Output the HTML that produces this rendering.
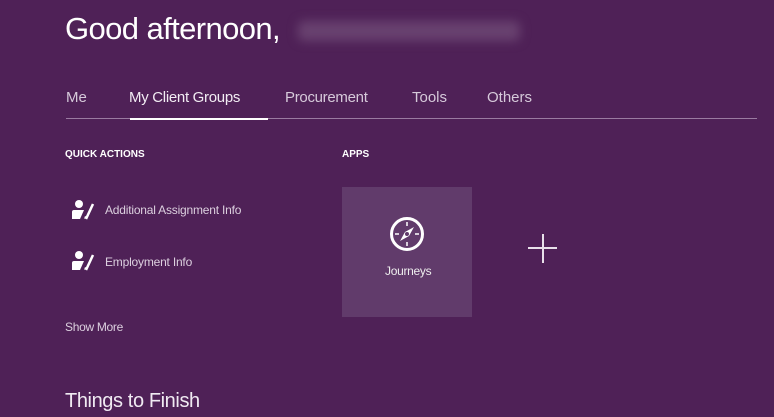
<!DOCTYPE html>
<html><head><meta charset="utf-8"><style>
body{margin:0;width:774px;height:417px;background:#4f2157;overflow:hidden;font-family:"Liberation Sans",sans-serif;color:#fff;position:relative}
.a{position:absolute;white-space:nowrap}
</style></head><body>
<div class="a" style="left:65px;top:11px;font-size:31px;color:#fff;letter-spacing:-0.6px">Good afternoon,</div>
<div class="a" style="left:298px;top:21px;width:222px;height:20px;background:#68416f;filter:blur(5px);border-radius:6px"></div>
<div class="a" style="left:66px;top:89px;font-size:15px;color:#d6c9da">Me</div>
<div class="a" style="left:129px;top:89px;font-size:15px;color:#f2ecf3;letter-spacing:-0.3px">My Client Groups</div>
<div class="a" style="left:285px;top:89px;font-size:15px;color:#d6c9da;letter-spacing:-0.3px">Procurement</div>
<div class="a" style="left:412px;top:89px;font-size:15px;color:#d6c9da">Tools</div>
<div class="a" style="left:487px;top:89px;font-size:15px;color:#d6c9da">Others</div>
<div class="a" style="left:66px;top:118px;width:691px;height:1px;background:#9a7ba1"></div>
<div class="a" style="left:130px;top:118px;width:138px;height:2px;background:#fff"></div>
<div class="a" style="left:65px;top:149px;font-size:10px;font-weight:bold">QUICK ACTIONS</div>
<div class="a" style="left:342px;top:149px;font-size:10px;font-weight:bold">APPS</div>
<svg class="a" style="left:72px;top:200px" width="24" height="20" viewBox="0 0 24 20"><circle cx="7" cy="4" r="4" fill="#fff"/><path d="M0 19V12Q0 10 2 10H12L8 19Z" fill="#fff"/><path d="M14 19L21 4" stroke="#fff" stroke-width="2.5"/><path d="M12 19l1-3 2 1z" fill="#fff"/></svg>
<svg class="a" style="left:72px;top:251px" width="24" height="20" viewBox="0 0 24 20"><circle cx="7" cy="4" r="4" fill="#fff"/><path d="M0 19V12Q0 10 2 10H12L8 19Z" fill="#fff"/><path d="M14 19L21 4" stroke="#fff" stroke-width="2.5"/><path d="M12 19l1-3 2 1z" fill="#fff"/></svg>
<div class="a" style="left:105px;top:203px;font-size:12px;color:#dcd0df;letter-spacing:-0.2px">Additional Assignment Info</div>
<div class="a" style="left:105px;top:255px;font-size:12px;color:#dcd0df;letter-spacing:-0.2px">Employment Info</div>
<div class="a" style="left:65px;top:320px;font-size:12px;color:#dcd0df;letter-spacing:-0.3px">Show More</div>
<div class="a" style="left:342px;top:187px;width:130px;height:130px;background:#613b6b"></div>
<svg class="a" style="left:389px;top:216px" width="36" height="36" viewBox="0 0 36 36"><circle cx="18" cy="18" r="15.5" fill="none" stroke="#fff" stroke-width="3"/><path d="M18 6v4M18 26v4M6 18h4M26 18h4" stroke="#fff" stroke-width="1.5"/><path d="M25 11L20 20L11 25L16 16Z" fill="#fff"/><circle cx="18" cy="18" r="2" fill="#613b6b"/></svg>
<div class="a" style="left:385px;top:264px;font-size:12px;color:#eee;letter-spacing:-0.3px">Journeys</div>
<div class="a" style="left:528px;top:247px;width:29px;height:1.5px;background:#e8e0ea"></div>
<div class="a" style="left:542px;top:234px;width:1.5px;height:29px;background:#e8e0ea"></div>
<div class="a" style="left:65px;top:390px;font-size:20px;color:#f0eaf2;letter-spacing:-0.4px">Things to Finish</div>
</body></html>
